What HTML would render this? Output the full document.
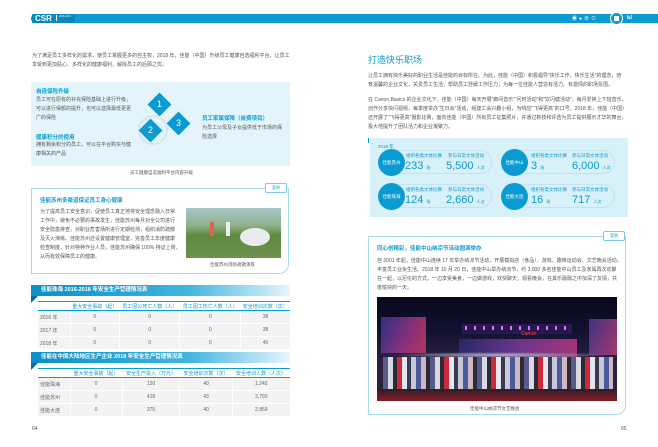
<!DOCTYPE html>
<html><head><meta charset="utf-8"><style>
*{margin:0;padding:0;box-sizing:border-box}
body{width:658px;height:447px;background:#fff;position:relative;overflow:hidden;font-family:"Liberation Sans","Noto Sans CJK SC",sans-serif;color:#555}
.a{position:absolute}
.t{font-size:5px;line-height:9px;color:#555;white-space:nowrap}
.h{font-size:5.5px;font-weight:bold;color:#0a9bd2;white-space:nowrap}
.dia{position:absolute;width:19px;height:19px;background:#0a9bd2;transform:rotate(45deg);border:1.5px solid #fff}
.dn{position:absolute;color:#fff;font-size:9px;width:27px;text-align:center}
.bar{position:absolute;left:31px;width:259px;height:11px;background:linear-gradient(90deg,#0a8fc8,#3fb4e0 60%,#e6f6fc);color:#fff;font-size:5.5px;font-weight:bold;padding-left:10px;line-height:11px}
.tri{position:absolute;left:31px;width:0;height:0;border-top:7px solid #0a6e9e;border-right:7px solid transparent}
table{position:absolute;left:38px;width:252px;border-collapse:collapse;font-size:5px;color:#666}
td{text-align:center;height:13px;background:#f3f3f3;border-bottom:1px solid #fff;border-left:1px solid #fff}
th{font-weight:normal;color:#0a9bd2;height:9px;border-top:1px solid #0a9bd2;border-bottom:1px solid #0a9bd2}
td:first-child{text-align:left;padding-left:2px;border-left:0}
.card{position:absolute;width:110px;height:24px;border:1px solid #bfe4f2;border-radius:12px}
.circ{position:absolute;width:27px;height:27px;border-radius:50%;background:#0a9bd2;color:#fff;font-size:4.5px;text-align:center;line-height:27px}
.lab{position:absolute;font-size:4.5px;color:#0a9bd2;white-space:nowrap}
.num{position:absolute;font-size:11px;color:#0a9bd2;white-space:nowrap}
.num small{font-size:4px}
.tag{position:absolute;width:22px;height:10px;border:1px solid #7cc9e5;border-radius:2px;background:#fff;font-size:4px;color:#0a9bd2;text-align:center;line-height:8px}
</style></head><body>
<div class="a" style="left:32px;top:14px;width:626px;height:9px;background:#0a9bd2"></div>
<div class="a" style="left:31px;top:14px;width:44px;height:9px;background:#0a86c0;border-radius:5px 0 0 5px"></div>
<div class="a" style="left:35px;top:13px;font-size:8px;font-weight:bold;color:#fff;line-height:11px">CSR</div>
<div class="a" style="left:56px;top:15px;width:17px;height:6px;border-left:1px solid #fff;font-size:2.5px;color:#dff;padding-left:2px">2018-2019</div>
<div class="a" style="left:572px;top:15px;font-size:5px;color:#fff;letter-spacing:2px">◉●⊕⊙</div>
<div class="a" style="left:610px;top:12px;width:13px;height:13px;border-radius:50%;background:#0a9bd2;border:1px solid #fff"></div>
<div class="a" style="left:614px;top:16px;width:5px;height:5px;background:#fff"></div>
<div class="a" style="left:627px;top:15px;font-size:5px;color:#fff;font-weight:bold">Ы</div>

<div class="a t" style="left:32px;top:52px">为了满足员工多样化的需求，使员工掌握更多的自主权，2018 年，佳能（中国）升级员工健康自选福利平台，让员工<br>享受到更加贴心、多样化的健康福利，解除员工的后顾之忧。</div>
<div class="a" style="left:31px;top:82px;width:259px;height:84px;background:#e3f4fa"></div>
<div class="a h" style="left:36px;top:87px">自选保险升级</div>
<div class="a t" style="left:36px;top:96px">员工可在原有的补充保险基础上进行升级，<br>可以进行保额的提升，也可以选择最低更更<br>广的保险</div>
<div class="a h" style="left:36px;top:133px">健康积分的使用</div>
<div class="a t" style="left:36px;top:141px">拥有剩余积分的员工，可以在平台购买与健<br>康相关的产品</div>
<div class="a" style="left:138px;top:115px;width:30px;height:30px;border:2px solid #d6e6ea;border-radius:50%"></div>
<div class="dia" style="left:150px;top:95px"></div><div class="dn" style="left:146px;top:99px">1</div>
<div class="dia" style="left:141px;top:121px"></div><div class="dn" style="left:137px;top:125px">2</div>
<div class="dia" style="left:169px;top:114px"></div><div class="dn" style="left:165px;top:118px">3</div>
<div class="a h" style="left:202px;top:114px">员工家属保障（自费项目）</div>
<div class="a t" style="left:202px;top:124px">为员工父母及子女提供低于市场的保<br>险选择</div>
<div class="a t" style="left:130px;top:168px;font-size:4.5px">员工健康自选福利平台内容升级</div>

<div class="a" style="left:31px;top:188px;width:258px;height:86px;border:1px solid #a8dbe9;border-radius:0 0 10px 0"></div>
<div class="tag" style="left:265px;top:183px">案例</div>
<div class="a h" style="left:40px;top:196px">佳能苏州多渠道保证员工身心健康</div>
<div class="a t" style="left:40px;top:208px">为了提高员工安全意识，促使员工真正地将安全理念融入日常<br>工作中，避免不必要的事故发生，佳能苏州每月对全公司进行<br>安全隐患排查，对职业危害场所进行定期检测，组织消防疏散<br>及灭火演练。佳能苏州还设置健康管理室，完善员工年度健康<br>检查制度，针对特种作业人员，佳能苏州确保 100% 持证上岗，<br>从而有效保障员工的健康。</div>
<div class="a" style="left:186px;top:208px;width:95px;height:50px;background:linear-gradient(180deg,#a9c7c9 0%,#8fb08a 35%,#5f8a3e 55%,#6e9150 100%)"></div>
<div class="a" style="left:240px;top:228px;width:30px;height:18px;border-radius:50%;background:#e8ecee"></div>
<div class="a" style="left:210px;top:222px;width:4px;height:14px;background:#d64"></div>
<div class="a" style="left:226px;top:222px;width:4px;height:14px;background:#eee"></div>
<div class="a t" style="left:210px;top:260px;font-size:4.5px">佳能苏州消防疏散演练</div>

<div class="bar" style="top:285px">佳能珠海 2016-2018 年安全生产管理情况表</div>
<div class="tri" style="top:296px"></div>
<table style="top:301px"><tr><th style="width:32px"></th><th>重大安全事故（起）</th><th>员工因公死亡人数（人）</th><th>员工因工伤亡人数（人）</th><th>安全培训次数（次）</th></tr>
<tr><td>2016 年</td><td>0</td><td>0</td><td>0</td><td>38</td></tr>
<tr><td>2017 年</td><td>0</td><td>0</td><td>0</td><td>38</td></tr>
<tr><td>2018 年</td><td>0</td><td>0</td><td>0</td><td>40</td></tr></table>
<div class="bar" style="top:352px">佳能在中国大陆地区生产企业 2018 年安全生产管理情况表</div>
<div class="tri" style="top:363px"></div>
<table style="top:368px"><tr><th style="width:32px"></th><th>重大安全事故（起）</th><th>安全生产投入（万元）</th><th>安全培训次数（次）</th><th>安全培训人数（人次）</th></tr>
<tr><td>佳能珠海</td><td>0</td><td>120</td><td>40</td><td>1,242</td></tr>
<tr><td>佳能苏州</td><td>0</td><td>418</td><td>43</td><td>3,793</td></tr>
<tr><td>佳能大连</td><td>0</td><td>375</td><td>40</td><td>2,859</td></tr></table>
<div class="a t" style="left:32px;top:425px">64</div>

<div class="a" style="left:368px;top:53px;font-size:9px;color:#0a9bd2">打造快乐职场</div>
<div class="a t" style="left:368px;top:72px">让员工拥有快乐美好的职业生活是佳能的目标所在。为此，佳能（中国）积极倡导“快乐工作，快乐生活”的理念，培<br>育温馨的企业文化，关爱员工生活，帮助员工舒缓工作压力，为每一位佳能人营造有活力、有激情的职场氛围。</div>
<div class="a t" style="left:368px;top:96px">在 Canon Basics 的企业文化下，佳能（中国）每天开展“廊间音乐”“问时活动”和“饮闪健活动”，每月爱换上下班音乐，<br>创作分享快闪视频，每季度举办“生日会”活动，组建工会兴趣小组，为响应“飞得更高”的口号，2018 年，佳能（中国）<br>还开展了“飞得更高”摄影比赛，面向佳能（中国）所有员工征集照片，并通过新技和评选为员工提供展示才华的舞台，<br>极大地提升了团队活力和企业凝聚力。</div>
<div class="a" style="left:370px;top:138px;width:258px;height:79px;background:#d8f0f8"></div>
<div class="a" style="left:368px;top:138px;width:1px;height:5px;background:#0a9bd2"></div>
<div class="a" style="left:378px;top:144px;font-size:4.5px;color:#0a9bd2">2018 年</div>
<div class="card" style="left:382px;top:150px"></div><div class="circ" style="left:378px;top:149px">佳能苏州</div>
<div class="lab" style="left:406px;top:153px">组织各类文体比赛</div><div class="lab" style="left:448px;top:153px">参与日常文体活动</div>
<div class="num" style="left:405px;top:160px">233 <small>场</small></div><div class="num" style="left:446px;top:160px">5,500 <small>人次</small></div>
<div class="card" style="left:505px;top:150px"></div><div class="circ" style="left:501px;top:149px">佳能中山</div>
<div class="lab" style="left:531px;top:153px">组织各类文体比赛</div><div class="lab" style="left:572px;top:153px">参与日常文体活动</div>
<div class="num" style="left:531px;top:160px">3 <small>场</small></div><div class="num" style="left:572px;top:160px">6,000 <small>人次</small></div>
<div class="card" style="left:382px;top:184px"></div><div class="circ" style="left:378px;top:183px">佳能珠海</div>
<div class="lab" style="left:406px;top:187px">组织各类文体比赛</div><div class="lab" style="left:448px;top:187px">参与日常文体活动</div>
<div class="num" style="left:405px;top:194px">124 <small>场</small></div><div class="num" style="left:446px;top:194px">2,660 <small>人次</small></div>
<div class="card" style="left:505px;top:184px"></div><div class="circ" style="left:501px;top:183px">佳能大连</div>
<div class="lab" style="left:531px;top:187px">组织各类文体比赛</div><div class="lab" style="left:572px;top:187px">参与日常文体活动</div>
<div class="num" style="left:531px;top:194px">16 <small>场</small></div><div class="num" style="left:572px;top:194px">717 <small>人次</small></div>

<div class="a" style="left:368px;top:236px;width:258px;height:179px;border:1px solid #a8dbe9;border-radius:0 0 10px 0"></div>
<div class="tag" style="left:603px;top:231px">案例</div>
<div class="a h" style="left:377px;top:244px">同心创精彩，佳能中山纳凉节活动圆满举办</div>
<div class="a t" style="left:377px;top:257px">自 2001 年起，佳能中山连续 17 年举办纳凉节活动，开展模拟店（食品）、游戏、趣味运动会、文艺晚会活动，<br>丰富员工业余生活。2018 年 10 月 20 日，佳能中山举办纳凉节，约 3,000 多名佳能中山员工及家属再次欢聚<br>在一起，以尼伦的方式，一边享受美食，一边做游戏，欢快聊天，观看晚会，在其乐融融之中加深了友情，共<br>度愉快的一天。</div>
<!-- stage photo -->
<div class="a" style="left:377px;top:297px;width:240px;height:104px;background:linear-gradient(180deg,#08071a 0%,#141232 35%,#2a2045 60%,#2a2438 100%);overflow:hidden">
 <div class="a" style="left:85px;top:27px;width:110px;height:10px;background:#2a1850"></div>
 <div class="a" style="left:88px;top:29px;width:104px;height:4px;background:repeating-linear-gradient(90deg,#e070ff 0 2px,transparent 2px 9px)"></div>
 <div class="a" style="left:82px;top:42px;width:118px;height:30px;background:linear-gradient(100deg,#2a2a70,#7a3a9a 50%,#c03a80);opacity:.85"></div>
 <div class="a" style="left:4px;top:20px;width:45px;height:36px;background:linear-gradient(110deg,#3a3aa0,#b03a90 60%,#e04060);opacity:.75"></div>
 <div class="a" style="left:212px;top:22px;width:28px;height:36px;background:linear-gradient(110deg,#5040a0,#d04080);opacity:.75"></div>
 <div class="a" style="left:10px;top:55px;width:225px;height:6px;background:radial-gradient(ellipse at center,#dde 0,#889 40%,transparent 70%);opacity:.7"></div>
 <div class="a" style="left:6px;top:60px;width:230px;height:36px;background:repeating-linear-gradient(90deg,#5a5a8a 0 5px,#d9d9e0 5px 10px,#2a2a3a 10px 14px,#cc2a3a 14px 19px,#e6e6ee 19px 24px,#3a3a50 24px 28px,#c8c8d8 28px 33px,#4a5a9a 33px 38px,#d0b8c0 38px 43px,#2a2a34 43px 47px)"></div>
 <div class="a" style="left:0;top:92px;width:240px;height:12px;background:linear-gradient(180deg,#2a2028,#8a1a24)"></div>
 <div class="a" style="left:144px;top:34px;font-size:5px;color:#e03040;font-weight:bold">Canon</div>
</div>
<div class="a t" style="left:470px;top:404px;font-size:4.5px">佳能中山纳凉节文艺晚会</div>
<div class="a t" style="left:621px;top:425px">65</div>
</body></html>
